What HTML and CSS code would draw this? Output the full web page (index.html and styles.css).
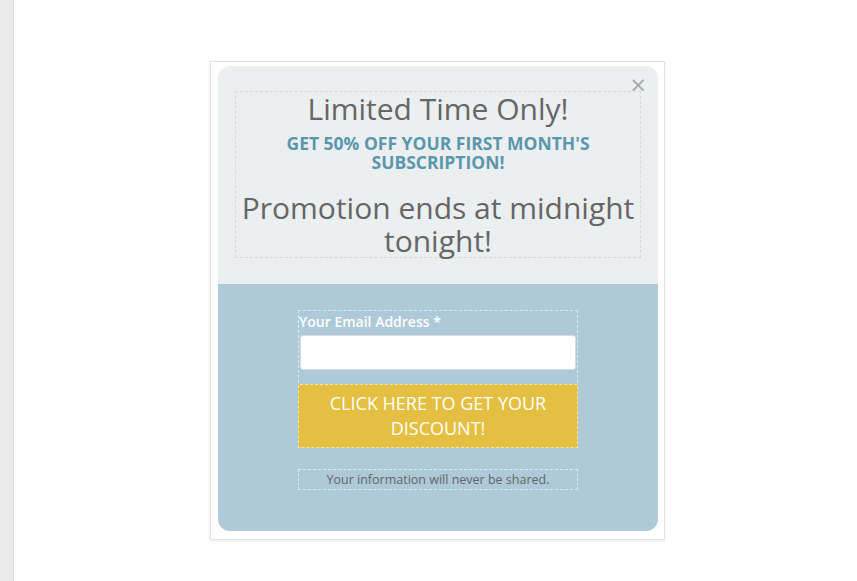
FILE: index.html
```html
<!DOCTYPE html>
<html lang="en">

<head>
  <meta charset="UTF-8" />
  <meta name="viewport" content="width=device-width, initial-scale=1.0" />
  <title>Limited Time Only</title>
  <link rel="stylesheet" href="styles.css">
</head>

<body>
  <div class="side"></div>

  <div class="main">
    <div class="popup">
      <div class="panel">
        <div class="promo">
          <a class="close" href="javascript:;">&times;</a>
          <div class="promo-box">
            <h1>Limited Time Only!</h1>
            <h2>GET 50% OFF YOUR FIRST MONTH'S SUBSCRIPTION!</h2>
            <p class="ends">Promotion ends at midnight tonight!</p>
          </div>
        </div>

        <div class="signup">
          <form class="form-box">
            <label for="email">Your Email Address *</label>
            <input id="email" type="text" />
            <button type="button">CLICK HERE TO GET YOUR DISCOUNT!</button>
          </form>
          <p class="note">Your information will never be shared.</p>
        </div>
      </div>
    </div>
  </div>
</body>

</html>
```

FILE: styles.css
```css
* {
  margin: 0;
  padding: 0;
  box-sizing: border-box;
}

body {
  display: flex;
  min-height: 581px;
  font-family: "Open Sans", "Liberation Sans", sans-serif;
  background: #fff;
}

.side {
  width: 14px;
  background: #ebebeb;
  border-right: 1px solid #dcdcdc;
}

.main {
  flex: 1;
  padding: 61px 0 0 196px;
}

.popup {
  width: 455px;
  padding: 4px 6px 8px 7px;
  border: 1px solid #e2e2e2;
  box-shadow: 0 1px 3px rgba(0, 0, 0, 0.08);
  background: #fff;
}

.panel {
  border-radius: 12px;
  overflow: hidden;
}

.promo {
  position: relative;
  background: #ebeff0;
  padding: 25px 17px 26px;
}

.close {
  position: absolute;
  top: 5px;
  right: 12px;
  font-size: 27px;
  line-height: 28px;
  color: #a9a9a9;
  text-decoration: none;
}

.promo-box {
  border: 1px dashed #d3dbe0;
  text-align: center;
  color: #666;
}

.promo-box h1 {
  font-size: 30px;
  font-weight: normal;
  line-height: 34px;
}

.promo-box h2 {
  margin-top: 8px;
  padding: 0 30px;
  font-size: 17.5px;
  font-weight: bold;
  line-height: 19px;
  color: #5b97ac;
}

.promo-box .ends {
  margin-top: 19px;
  font-size: 30px;
  line-height: 33px;
}

.signup {
  background: #aec9d8;
  padding: 26px 0 41px;
}

.form-box {
  width: 280px;
  margin: 0 auto;
  border: 1px dashed rgba(255, 255, 255, 0.6);
  border-bottom: none;
  display: flex;
  flex-direction: column;
}

.form-box label {
  font-size: 14px;
  font-weight: 600;
  line-height: 21px;
  color: #fff;
}

.form-box input {
  height: 35px;
  margin: 3px 1px 0;
  border: 1px solid #d6dde2;
  border-radius: 3px;
  background: #fff;
}

.form-box button {
  margin: 14px -1px 0;
  height: 64px;
  border: 1px dashed rgba(255, 255, 255, 0.6);
  border-radius: 2px;
  background: #e5bf41;
  color: #fff;
  font-family: inherit;
  font-size: 18px;
  font-weight: 500;
  line-height: 25px;
  padding: 6px 24px;
}

.note {
  width: 280px;
  margin: 21px auto 0;
  border: 1px dashed rgba(255, 255, 255, 0.6);
  text-align: center;
  font-size: 12.5px;
  line-height: 19px;
  color: #666;
}
```
